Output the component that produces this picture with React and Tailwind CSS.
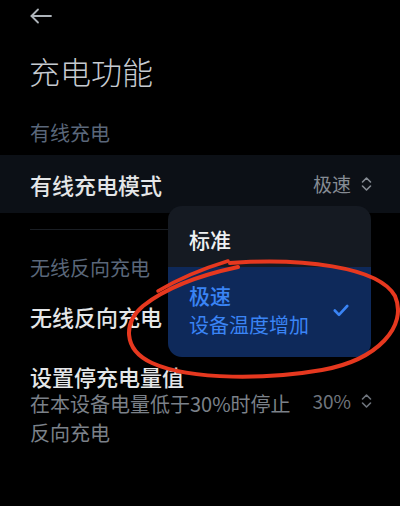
import React from "react";

const font = { fontFamily: '"Noto Sans CJK SC", "Noto Sans", sans-serif' };

function UpDown({ className = "" }) {
  return (
    <svg width="11" height="16" viewBox="0 0 11 16" className={className} fill="none" stroke="currentColor" strokeWidth="1.6" strokeLinecap="round" strokeLinejoin="round">
      <polyline points="1.5,6 5.5,2 9.5,6" />
      <polyline points="1.5,10 5.5,14 9.5,10" />
    </svg>
  );
}

export default function App() {
  return (
    <div className="relative w-[400px] h-[506px] bg-black overflow-hidden" style={font}>
      <div className="flex flex-col">
        {/* back arrow */}
        <div className="h-[32px] pl-[30px] flex items-center">
          <svg width="22" height="16" viewBox="0 0 22 16" fill="none" stroke="#aeb4ba" strokeWidth="1.8" strokeLinecap="round" strokeLinejoin="round">
            <line x1="1.5" y1="8" x2="21" y2="8" />
            <polyline points="8,1.5 1.5,8 8,14.5" />
          </svg>
        </div>
        {/* title */}
        <div className="mt-[19px] pl-[29px] h-[40px] leading-[40px] text-[31px] font-extralight text-[#c6cbd1]">充电功能</div>
        {/* section header */}
        <div className="mt-[29px] pl-[30px] h-[26px] leading-[26px] text-[20px] text-[#5a677a]">有线充电</div>
        {/* row highlighted */}
        <div className="mt-[9px] h-[58px] bg-[#0c1016] flex items-center justify-between pl-[30px] pr-[28px]">
          <span className="text-[22px] font-medium text-[#e4e6e8]">有线充电模式</span>
          <span className="flex items-center gap-[10px] text-[19px] text-[#868c94]">
            极速
            <UpDown />
          </span>
        </div>
        {/* divider */}
        <div className="mt-[16px] mx-[30px] h-px bg-[#1a1e24]" />
        {/* section header 2 */}
        <div className="mt-[25px] pl-[30px] h-[26px] leading-[26px] text-[20px] text-[#5a677a]">无线反向充电</div>
        {/* row */}
        <div className="mt-[19px] pl-[30px] h-[32px] leading-[32px] text-[22px] font-medium text-[#e4e6e8]">无线反向充电</div>
        {/* row with subtitle */}
        <div className="mt-[28px] pl-[30px] pr-[28px] flex items-start justify-between">
          <div className="flex flex-col">
            <span className="h-[32px] leading-[32px] text-[22px] font-medium text-[#e4e6e8]">设置停充电量值</span>
            <span className="w-[272px] leading-[29px] text-[20px] text-[#7b8189] -mt-[3px]">在本设备电量低于30%时停止反向充电</span>
          </div>
          <span className="mt-[27px] flex items-center gap-[10px] text-[19px] text-[#6f757d]">
            30%
            <UpDown />
          </span>
        </div>
      </div>

      {/* popup menu */}
      <div className="absolute left-[168px] top-[206px] w-[203px] h-[151px] rounded-[14px] overflow-hidden flex flex-col shadow-lg">
        <div className="h-[61px] bg-[#151a22] flex items-center pl-[21px] pt-[6px] text-[21px] font-medium text-[#eef0f2]">标准</div>
        <div className="flex-1 bg-[#0e295a] flex items-center justify-between pl-[21px] pr-[22px] pb-[4px]">
          <div className="flex flex-col">
            <span className="h-[30px] leading-[30px] text-[21px] font-medium text-[#3a84f5]">极速</span>
            <span className="h-[30px] leading-[30px] text-[20px] text-[#3a84f5]">设备温度增加</span>
          </div>
          <svg width="16" height="13" viewBox="0 0 16 13" fill="none" stroke="#3a84f5" strokeWidth="2.6" strokeLinecap="round" strokeLinejoin="round">
            <polyline points="1.8,6.5 6,10.8 14.2,2" />
          </svg>
        </div>
      </div>

      {/* red hand-drawn annotation */}
      <svg className="absolute left-0 top-0 pointer-events-none" width="400" height="506" viewBox="0 0 400 506" fill="none">
        <path
          d="M 230 263 C 300 258, 378 266, 395 296 C 408 326, 378 360, 322 370 C 270 379, 192 381, 152 363 C 122 349, 124 322, 143 306 C 163 290, 196 276, 238 267"
          stroke="#e6381f"
          strokeWidth="4"
          strokeLinecap="round"
        />
        <path d="M 158 291 C 180 278, 205 268, 228 261" stroke="#e6381f" strokeWidth="3.5" strokeLinecap="round" />
      </svg>
    </div>
  );
}
